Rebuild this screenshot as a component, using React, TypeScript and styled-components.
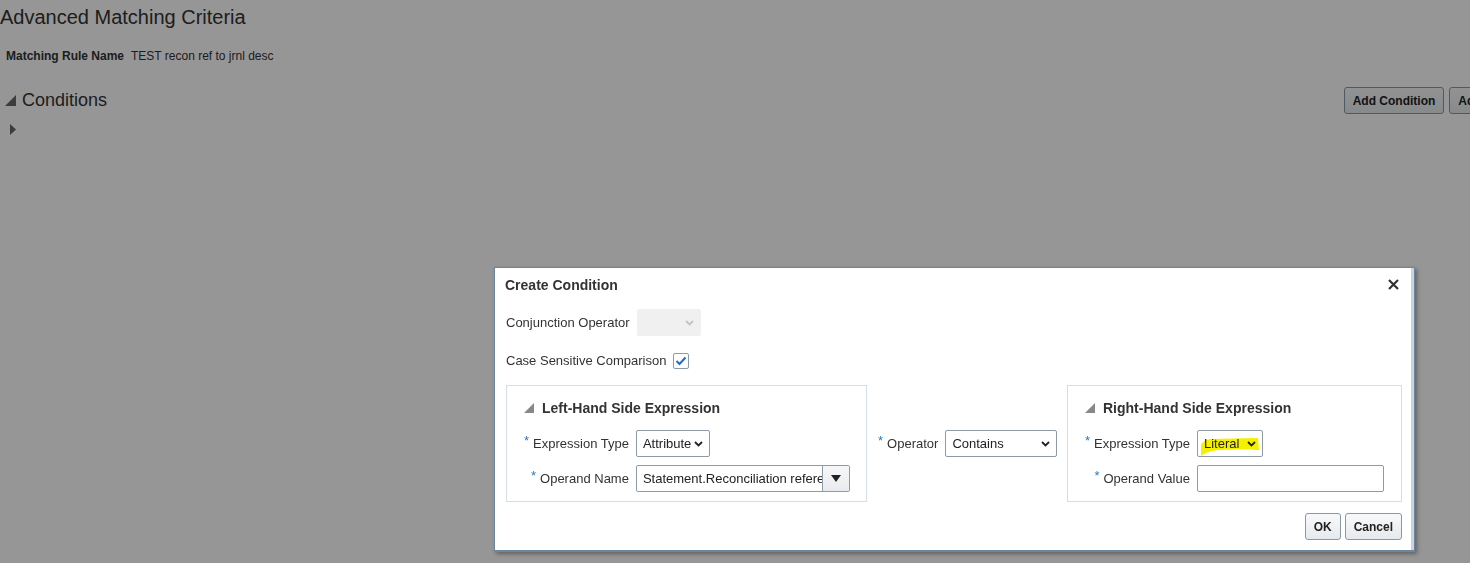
import React from "react";
import styled, { createGlobalStyle } from "styled-components";

const GlobalStyle = createGlobalStyle`
  html, body {
    margin: 0;
    padding: 0;
    height: 563px;
    overflow: hidden;
    background: #fff;
    font-family: "Liberation Sans", Arial, sans-serif;
    color: #333;
  }
`;

const Page = styled.div`
  position: relative;
  height: 563px;
  overflow: hidden;
`;

const PageTitle = styled.h1`
  margin: 0;
  padding: 5px 0 0 0;
  font-size: 20px;
  font-weight: normal;
  line-height: 24px;
  color: #333;
`;

const RuleRow = styled.div`
  display: flex;
  gap: 7px;
  padding: 19px 0 0 6px;
  font-size: 12px;
  line-height: 16px;
`;

const RuleLabel = styled.span`
  font-weight: bold;
`;

const SectionHeader = styled.div`
  display: flex;
  align-items: center;
  width: 1540px;
  margin-top: 23px;
  height: 27px;
`;

const SectionTitle = styled.div`
  display: flex;
  align-items: center;
  gap: 6px;
  padding-left: 5px;
  font-size: 18px;
  color: #333;
`;

const Toolbar = styled.div`
  margin-left: auto;
  display: flex;
  gap: 5px;
  padding-right: 10px;
`;

const Button = styled.button`
  height: 27px;
  padding: 0 8px;
  border: 1px solid #8a98a5;
  border-radius: 3px;
  background: linear-gradient(#f8f9fa, #e6eaed);
  font-family: "Liberation Sans", Arial, sans-serif;
  font-size: 12px;
  font-weight: bold;
  color: #222;
  cursor: pointer;
`;

const TreeRow = styled.div`
  padding: 7px 0 0 10px;
  height: 12px;
`;

const Overlay = styled.div`
  position: fixed;
  inset: 0;
  background: rgba(0, 0, 0, 0.41);
`;

const Dialog = styled.div`
  position: absolute;
  left: 494px;
  top: 267px;
  box-sizing: border-box;
  width: 921px;
  background: #fff;
  border: 1px solid #6b879f;
  border-bottom-width: 2px;
  box-shadow: inset -3px 0 0 #c9d3dc, 2px 2px 4px rgba(0, 0, 0, 0.35);
  display: flex;
  flex-direction: column;
  padding: 0 12px 10px 11px;
`;

const DialogHeader = styled.div`
  display: flex;
  align-items: center;
  justify-content: space-between;
  height: 35px;
  padding-bottom: 2px;
  box-sizing: border-box;
  margin-left: -1px;
`;

const DialogTitle = styled.div`
  font-size: 14px;
  font-weight: bold;
  color: #333;
`;

const CloseButton = styled.span`
  display: flex;
  margin-right: 3px;
  cursor: pointer;
`;

const Row = styled.div<{ $top: number }>`
  display: flex;
  align-items: center;
  gap: 7px;
  height: 27px;
  margin-top: ${(p) => p.$top}px;
`;

const Label = styled.label`
  font-size: 13px;
  color: #333;
  white-space: nowrap;
`;

const Required = styled.span`
  color: #2b79c2;
  font-size: 13px;
  position: relative;
  top: -3px;
  margin-right: 4px;
`;

const SelectBox = styled.div<{ $width: number; $disabled?: boolean }>`
  position: relative;
  box-sizing: border-box;
  width: ${(p) => p.$width}px;
  height: 27px;
  display: flex;
  align-items: center;
  justify-content: space-between;
  padding: 0 6px 0 6px;
  border: 1px solid ${(p) => (p.$disabled ? "#f0f0f0" : "#8e9ba7")};
  border-radius: 2px;
  background: ${(p) => (p.$disabled ? "#f0f0f0" : "#fff")};
  font-size: 13px;
  color: #222;
`;

const SelectText = styled.span`
  position: relative;
  z-index: 1;
  white-space: nowrap;
`;

const Highlight = styled.svg`
  position: absolute;
  left: 0;
  top: 0;
`;

const Checkbox = styled.div`
  box-sizing: border-box;
  width: 16px;
  height: 16px;
  border: 1px solid #8e9ba7;
  border-radius: 2px;
  background: #fff;
  display: flex;
  align-items: center;
  justify-content: center;
`;

const Panels = styled.div`
  display: flex;
  margin-top: 11px;
  height: 117px;
`;

const Panel = styled.div<{ $width: number }>`
  box-sizing: border-box;
  width: ${(p) => p.$width}px;
  border: 1px solid #d6dee5;
  padding: 10px 16px 0 17px;
`;

const PanelHeader = styled.div`
  display: flex;
  align-items: center;
  gap: 8px;
  height: 24px;
  font-size: 14px;
  font-weight: bold;
  color: #333;
`;

const FieldGrid = styled.div`
  display: grid;
  grid-template-columns: auto auto;
  justify-content: start;
  column-gap: 7px;
  row-gap: 8px;
  margin-top: 10px;
`;

const FieldLabel = styled(Label)`
  display: flex;
  align-items: center;
  justify-content: flex-end;
  height: 27px;
`;

const Middle = styled.div`
  flex: 1;
  display: flex;
  align-items: flex-start;
  justify-content: flex-start;
  padding: 45px 0 0 11px;
`;

const Combo = styled.div`
  display: flex;
  box-sizing: border-box;
  width: 214px;
  height: 27px;
  border: 1px solid #8e9ba7;
  border-radius: 2px;
  overflow: hidden;
`;

const ComboInput = styled.div`
  flex: 1;
  min-width: 0;
  display: flex;
  align-items: center;
  padding-left: 6px;
  font-size: 13px;
  color: #222;
  white-space: nowrap;
  overflow: hidden;
  border-right: 1px solid #8e9ba7;
`;

const ComboButton = styled.div`
  width: 26px;
  flex-shrink: 0;
  display: flex;
  align-items: center;
  justify-content: center;
  background: linear-gradient(#f6f7f8, #e9ecef);
`;

const TextInput = styled.div`
  box-sizing: border-box;
  width: 187px;
  height: 27px;
  border: 1px solid #8e9ba7;
  border-radius: 2px;
  background: #fff;
`;

const Footer = styled.div`
  display: flex;
  justify-content: flex-end;
  gap: 4px;
  margin-top: 11px;
`;

const Chevron = ({ color = "#222" }: { color?: string }) => (
  <svg width="9" height="6" viewBox="0 0 9 6" style={{ position: "relative", zIndex: 1 }}>
    <path d="M1 1 L4.5 4.5 L8 1" fill="none" stroke={color} strokeWidth="1.8" />
  </svg>
);

const Expanded = ({ size = 10, color = "#666" }: { size?: number; color?: string }) => (
  <svg width={size} height={size} viewBox="0 0 10 10">
    <polygon points="10,0 10,10 0,10" fill={color} />
  </svg>
);

const Req = ({ children }: { children: React.ReactNode }) => (
  <>
    <Required>*</Required>
    {children}
  </>
);

export default function App() {
  return (
    <>
      <GlobalStyle />
      <Page>
        <PageTitle>Advanced Matching Criteria</PageTitle>
        <RuleRow>
          <RuleLabel>Matching Rule Name</RuleLabel>
          <span>TEST recon ref to jrnl desc</span>
        </RuleRow>
        <SectionHeader>
          <SectionTitle>
            <Expanded size={11} />
            <span>Conditions</span>
          </SectionTitle>
          <Toolbar>
            <Button>Add Condition</Button>
            <Button>Add Group</Button>
          </Toolbar>
        </SectionHeader>
        <TreeRow>
          <svg width="6" height="11" viewBox="0 0 6 11">
            <polygon points="0,0 6,5.5 0,11" fill="#666" />
          </svg>
        </TreeRow>

        <Overlay />

        <Dialog>
          <DialogHeader>
            <DialogTitle>Create Condition</DialogTitle>
            <CloseButton>
              <svg width="11" height="11" viewBox="0 0 11 11">
                <path d="M1 1 L10 10 M10 1 L1 10" stroke="#333" strokeWidth="2.2" />
              </svg>
            </CloseButton>
          </DialogHeader>

          <Row $top={6}>
            <Label>Conjunction Operator</Label>
            <SelectBox $width={64} $disabled>
              <span />
              <Chevron color="#c4c4c4" />
            </SelectBox>
          </Row>

          <Row $top={11}>
            <Label>Case Sensitive Comparison</Label>
            <Checkbox>
              <svg width="12" height="10" viewBox="0 0 12 10">
                <path d="M1.5 5 L4.5 8 L10.5 1.5" fill="none" stroke="#1f6fc5" strokeWidth="2" />
              </svg>
            </Checkbox>
          </Row>

          <Panels>
            <Panel $width={361}>
              <PanelHeader>
                <Expanded color="#888" />
                <span>Left-Hand Side Expression</span>
              </PanelHeader>
              <FieldGrid>
                <FieldLabel>
                  <Req>Expression Type</Req>
                </FieldLabel>
                <SelectBox $width={74}>
                  <SelectText>Attribute</SelectText>
                  <Chevron />
                </SelectBox>
                <FieldLabel>
                  <Req>Operand Name</Req>
                </FieldLabel>
                <Combo>
                  <ComboInput>Statement.Reconciliation reference</ComboInput>
                  <ComboButton>
                    <svg width="10" height="7" viewBox="0 0 10 7">
                      <polygon points="0,0 10,0 5,7" fill="#222" />
                    </svg>
                  </ComboButton>
                </Combo>
              </FieldGrid>
            </Panel>

            <Middle>
              <Row $top={0}>
                <Label>
                  <Req>Operator</Req>
                </Label>
                <SelectBox $width={112}>
                  <SelectText>Contains</SelectText>
                  <Chevron />
                </SelectBox>
              </Row>
            </Middle>

            <Panel $width={335}>
              <PanelHeader>
                <Expanded color="#888" />
                <span>Right-Hand Side Expression</span>
              </PanelHeader>
              <FieldGrid>
                <FieldLabel>
                  <Req>Expression Type</Req>
                </FieldLabel>
                <SelectBox $width={66}>
                  <Highlight width="66" height="27" viewBox="0 0 66 27">
                    <path
                      d="M3 14 C 5 10, 9 8, 14 8 L 60 7 L 61 19 C 48 18, 30 19, 20 19 C 12 20, 7 22, 3 25 Z"
                      fill="#f5f000"
                    />
                  </Highlight>
                  <SelectText>Literal</SelectText>
                  <Chevron />
                </SelectBox>
                <FieldLabel>
                  <Req>Operand Value</Req>
                </FieldLabel>
                <TextInput />
              </FieldGrid>
            </Panel>
          </Panels>

          <Footer>
            <Button>OK</Button>
            <Button>Cancel</Button>
          </Footer>
        </Dialog>
      </Page>
    </>
  );
}
